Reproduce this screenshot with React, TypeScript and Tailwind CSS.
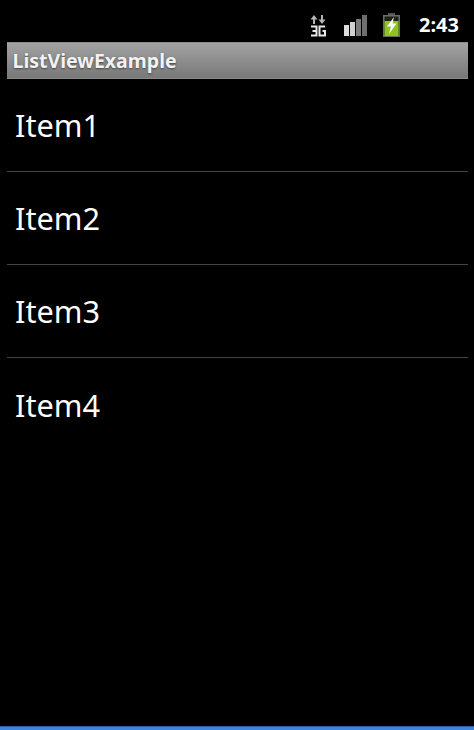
export default function App() {
  const items = ["Item1", "Item2", "Item3", "Item4"];
  return (
    <div className="w-[474px] h-[730px] bg-black flex flex-col overflow-hidden font-['Noto_Sans','Open_Sans',sans-serif]">
      <div className="h-[42px] shrink-0 flex items-center justify-end pr-[15px] pt-[8px]">
        <svg width="16" height="23" viewBox="0 0 16 23" className="mr-[18px]" fill="none">
          <path d="M4 1 L0.5 5.5 H3 V10 H5 V5.5 H7.5 Z" fill="#b4b4b4" />
          <path d="M12 10 L15.5 5.5 H13 V1 H11 V5.5 H8.5 Z" fill="#b4b4b4" />
          <path d="M1 12.5 H6.5 V21.5 H1 M2.5 17 H6.5" stroke="#e8e8e8" strokeWidth="2" />
          <path d="M15 12.5 H9.5 V21.5 H15 V17 H12.5" stroke="#e8e8e8" strokeWidth="2" />
        </svg>
        <svg width="23" height="21" viewBox="0 0 23 21" className="mr-[16px]">
          <rect x="0" y="10" width="5" height="11" fill="#dcdcdc" />
          <rect x="6" y="7" width="5" height="14" fill="#d0d0d0" />
          <rect x="12" y="4" width="5" height="17" fill="#7a7a7a" />
          <rect x="18" y="0" width="5" height="21" fill="#6e6e6e" />
        </svg>
        <svg width="17" height="24" viewBox="0 0 17 24" className="mr-[19px]">
          <rect x="5" y="0" width="7" height="3" fill="#555555" />
          <rect x="0.75" y="2.75" width="15.5" height="20.5" fill="#1c2216" stroke="#6c6c60" strokeWidth="1.5" />
          <rect x="1.5" y="8" width="14" height="15" fill="#8fc31f" />
          <path d="M11 4 L4 13.5 H8 L6 21 L13.5 10.5 H9.5 Z" fill="#ffffff" />
        </svg>
        <span className="text-white text-[20px] font-bold leading-none font-['Noto_Sans',sans-serif]">2:43</span>
      </div>
      <div className="ml-[6.5px] mr-[6px] h-[37px] shrink-0 flex items-center pl-[6px] bg-gradient-to-b from-[#a3a3a3] to-[#787878] border-y border-[#8c8c8c]">
        <span className="text-[#f2f2f2] text-[19.5px] font-bold leading-none [text-shadow:0_1px_2px_#444]">
          ListViewExample
        </span>
      </div>
      <div className="flex flex-col ml-[7px] mr-[6px]">
        {items.map((item, i) => (
          <div
            key={item}
            className={
              i < 3
                ? "h-[93px] flex items-center pl-[8px] pt-[1px] border-b border-[#444444]"
                : "h-[93px] flex items-center pl-[8px] pt-[1px]"
            }
          >
            <span className="text-white text-[30.7px] leading-none">{item}</span>
          </div>
        ))}
      </div>
      <div className="mt-auto h-[4px] bg-[#3f85d9] border-t border-[#2c5ea0]" />
    </div>
  );
}
